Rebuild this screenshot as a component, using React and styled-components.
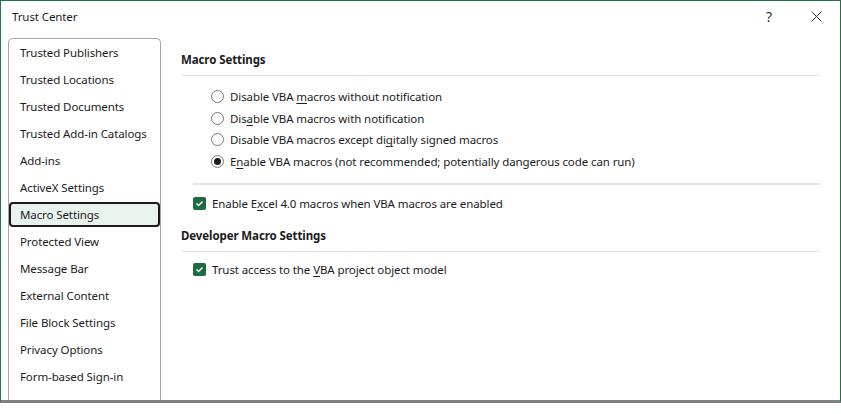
import React from "react"
import styled, { createGlobalStyle } from "styled-components"

const GlobalStyle = createGlobalStyle`
	html, body {
		margin: 0;
		padding: 0;
		background: #ffffff;
	}
	body {
		font-family: "Segoe UI", "Noto Sans", "Liberation Sans", sans-serif;
		font-size: 11.5px;
		letter-spacing: -0.1px;
		color: #1b1b1b;
	}
`

const Window = styled.div`
	box-sizing: border-box;
	width: 841px;
	height: 403px;
	display: flex;
	flex-direction: column;
	background: #ffffff;
	border: 1px solid #217346;
	border-bottom: 3px solid #808080;
`

const TitleBar = styled.div`
	height: 31px;
	display: flex;
	align-items: center;
	padding-left: 11px;
	flex-shrink: 0;
`

const TitleText = styled.div`
	flex: 1;
`

const TitleButton = styled.button`
	border: none;
	background: transparent;
	padding: 0;
	width: ${(p) => p.$width}px;
	height: 31px;
	display: flex;
	align-items: center;
	justify-content: center;
	font-family: inherit;
	font-size: 14px;
	color: #333;
`

const Body = styled.div`
	flex: 1;
	display: flex;
	min-height: 0;
	padding-top: 6px;
`

const Nav = styled.div`
	margin-left: 7px;
	width: 151px;
	border: 1px solid #a6a6a6;
	border-bottom: none;
	border-radius: 5px 5px 0 0;
	display: flex;
	flex-direction: column;
`

const NavSlot = styled.div`
	height: 27px;
	padding: 1px 0;
	box-sizing: border-box;
	display: flex;
`

const NavItem = styled.div`
	flex: 1;
	display: flex;
	align-items: center;
	padding-left: 9px;
	border: 2px solid ${(p) => (p.$active ? "#1b1b1b" : "transparent")};
	border-radius: 4px;
	background: ${(p) => (p.$active ? "#e9f3ed" : "transparent")};
	white-space: nowrap;
`

const Content = styled.div`
	flex: 1;
	padding: 12px 20px 0 20px;
	display: flex;
	flex-direction: column;
`

const SectionTitle = styled.div`
	font-weight: 700;
	line-height: 20px;
	padding-bottom: 5px;
	border-bottom: 1px solid #e3e3e3;
`

const RadioGroup = styled.div`
	padding-left: 30px;
	margin-top: 10px;
	display: flex;
	flex-direction: column;
`

const OptionRow = styled.label`
	display: flex;
	align-items: center;
	height: ${(p) => p.$h || 21.5}px;
	gap: 6px;
	white-space: nowrap;
`

const Radio = styled.span`
	box-sizing: border-box;
	width: 13px;
	height: 13px;
	border-radius: 50%;
	border: 1px solid #7b7b7b;
	background: #fff;
	display: flex;
	align-items: center;
	justify-content: center;
	&::after {
		content: "";
		width: 7px;
		height: 7px;
		border-radius: 50%;
		background: #1b1b1b;
		display: ${(p) => (p.$checked ? "block" : "none")};
	}
`

const Divider = styled.div`
	margin: 11px 0 0 12px;
	height: 2px;
	background: #e3e3e3;
`

const CheckGroup = styled.div`
	padding-left: 12px;
	margin-top: ${(p) => p.$top}px;
	margin-bottom: ${(p) => p.$bottom || 0}px;
`

const Box = styled.span`
	width: 13px;
	height: 13px;
	border-radius: 2px;
	background: #1d6b40;
	display: flex;
	align-items: center;
	justify-content: center;
`

const Key = styled.span`
	text-decoration: underline;
	text-underline-offset: 2px;
`

const navItems = [
	"Trusted Publishers",
	"Trusted Locations",
	"Trusted Documents",
	"Trusted Add-in Catalogs",
	"Add-ins",
	"ActiveX Settings",
	"Macro Settings",
	"Protected View",
	"Message Bar",
	"External Content",
	"File Block Settings",
	"Privacy Options",
	"Form-based Sign-in",
]

const Check = () => (
	<Box>
		<svg width="9" height="9" viewBox="0 0 9 9">
			<path d="M1.5 4.6 L3.6 6.6 L7.5 2.4" fill="none" stroke="#fff" strokeWidth="1.4" />
		</svg>
	</Box>
)

export default function App() {
	return (
		<>
			<GlobalStyle />
			<Window>
				<TitleBar>
					<TitleText>Trust Center</TitleText>
					<TitleButton $width={46}>?</TitleButton>
					<TitleButton $width={48}>
						<svg width="11" height="11" viewBox="0 0 11 11">
							<path d="M0.5 0.5 L10.5 10.5 M10.5 0.5 L0.5 10.5" stroke="#333" strokeWidth="1" />
						</svg>
					</TitleButton>
				</TitleBar>
				<Body>
					<Nav>
						{navItems.map((item) => (
							<NavSlot key={item}>
								<NavItem $active={item === "Macro Settings"}>{item}</NavItem>
							</NavSlot>
						))}
					</Nav>
					<Content>
						<SectionTitle>Macro Settings</SectionTitle>
						<RadioGroup>
							<OptionRow>
								<Radio />
								<span>
									Disable VBA <Key>m</Key>acros without notification
								</span>
							</OptionRow>
							<OptionRow>
								<Radio />
								<span>
									Dis<Key>a</Key>ble VBA macros with notification
								</span>
							</OptionRow>
							<OptionRow>
								<Radio />
								<span>
									Disable VBA macros except di<Key>g</Key>itally signed macros
								</span>
							</OptionRow>
							<OptionRow>
								<Radio $checked />
								<span>
									E<Key>n</Key>able VBA macros (not recommended; potentially dangerous code can run)
								</span>
							</OptionRow>
						</RadioGroup>
						<Divider />
						<CheckGroup $top={7} $bottom={12}>
							<OptionRow $h={22}>
								<Check />
								<span>
									Enable E<Key>x</Key>cel 4.0 macros when VBA macros are enabled
								</span>
							</OptionRow>
						</CheckGroup>
						<SectionTitle>Developer Macro Settings</SectionTitle>
						<CheckGroup $top={6}>
							<OptionRow $h={22}>
								<Check />
								<span>
									Trust access to the <Key>V</Key>BA project object model
								</span>
							</OptionRow>
						</CheckGroup>
					</Content>
				</Body>
			</Window>
		</>
	)
}
